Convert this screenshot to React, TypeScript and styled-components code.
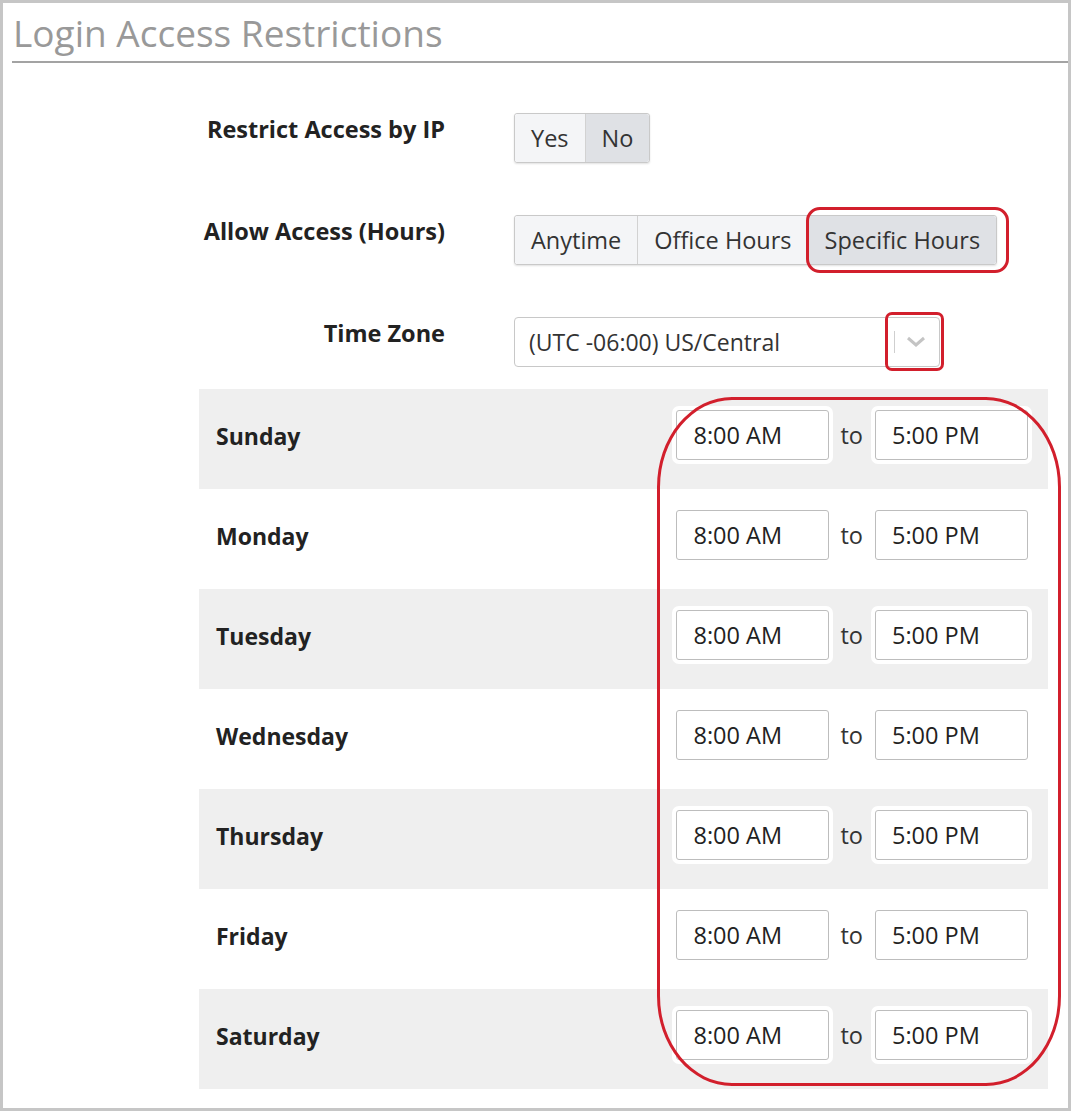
import React from 'react';
import styled, { createGlobalStyle } from 'styled-components';

const GlobalStyle = createGlobalStyle`
  html, body {
    margin: 0;
    padding: 0;
    background: #fff;
  }
  body {
    font-family: 'Open Sans', 'Liberation Sans', sans-serif;
    color: #222;
  }
`;

const ANNOTATION = '#d21f2c';

const Panel = styled.div`
  width: 1071px;
  height: 1111px;
  box-sizing: border-box;
  border: 3px solid #c6c6c6;
  background: #fff;
  overflow: hidden;
`;

const Header = styled.h1`
  margin: 0 0 0 9px;
  padding: 8px 0 6px 1px;
  font-size: 37px;
  font-weight: 400;
  line-height: 44px;
  color: #999;
  border-bottom: 2px solid #a3a3a3;
`;

const Form = styled.div`
  padding: 50px 20px 0 196px;
`;

const Fields = styled.div`
  display: flex;
  flex-direction: column;
  gap: 52px;
  margin-bottom: 22px;
`;

const FieldRow = styled.div`
  display: grid;
  grid-template-columns: 246px 1fr;
  column-gap: 69px;
  align-items: start;
`;

const FieldLabel = styled.div`
  text-align: right;
  font-size: 23.5px;
  font-weight: 700;
  line-height: 30px;
  padding-top: 1px;
  color: #222;
`;

const ButtonGroup = styled.div`
  display: inline-flex;
  border: 1px solid #c9c9c9;
  border-radius: 3px;
  box-shadow: 0 1px 2px rgba(0, 0, 0, 0.12);
  height: 50px;
  box-sizing: border-box;
`;

const GroupButton = styled.button<{ $active?: boolean }>`
  position: relative;
  font-family: inherit;
  font-size: 23.5px;
  color: #333;
  padding: 0 16px;
  border: none;
  border-left: 1px solid #d2d2d2;
  background: ${(p) => (p.$active ? '#dfe1e5' : '#f4f5f7')};
  cursor: pointer;

  &:first-child {
    border-left: none;
    border-radius: 3px 0 0 3px;
  }
  &:last-child {
    border-radius: 0 3px 3px 0;
  }
`;

const Annotation = styled.span<{ $radius: string; $inset: string }>`
  position: absolute;
  inset: ${(p) => p.$inset};
  border: 3px solid ${ANNOTATION};
  border-radius: ${(p) => p.$radius};
  pointer-events: none;
`;

const Select = styled.div`
  position: relative;
  width: 426px;
  height: 50px;
  box-sizing: border-box;
  border: 1px solid #c8c8c8;
  border-radius: 4px;
  display: flex;
  align-items: center;
  padding-left: 14px;
  font-size: 23px;
  color: #333;
  background: #fff;
`;

const SelectText = styled.span`
  flex: 1;
`;

const SelectToggle = styled.span`
  position: relative;
  display: flex;
  align-items: center;
  width: 45px;
  height: 100%;
`;

const Separator = styled.span`
  width: 1px;
  height: 22px;
  background: #cfcfcf;
`;

const Chevron = styled.svg`
  margin-left: 11px;
`;

const DaysList = styled.div`
  position: relative;
`;

const DayRow = styled.div<{ $shaded: boolean }>`
  display: flex;
  align-items: center;
  height: 100px;
  box-sizing: border-box;
  padding: 21px 20px 29px 17px;
  background: ${(p) => (p.$shaded ? '#efefef' : '#fff')};
`;

const DayName = styled.div`
  flex: 1;
  font-size: 23px;
  font-weight: 700;
  color: #222;
  padding-top: 2px;
`;

const TimeInput = styled.input`
  width: 153px;
  height: 50px;
  box-sizing: border-box;
  border: 1px solid #bdbdbd;
  border-radius: 3px;
  padding: 0 0 0 16px;
  font-family: inherit;
  font-size: 23.5px;
  color: #222;
  background: #fff;
  box-shadow: 0 0 0 4px #fff;
  outline: none;
`;

const To = styled.span`
  font-size: 23.5px;
  color: #333;
  margin: 0 12px 0 11px;
`;

const days = ['Sunday', 'Monday', 'Tuesday', 'Wednesday', 'Thursday', 'Friday', 'Saturday'];

const App = () => {
  return (
    <>
      <GlobalStyle />
      <Panel>
        <Header>Login Access Restrictions</Header>
        <Form>
          <Fields>
            <FieldRow>
              <FieldLabel>Restrict Access by IP</FieldLabel>
              <div>
                <ButtonGroup>
                  <GroupButton>Yes</GroupButton>
                  <GroupButton $active>No</GroupButton>
                </ButtonGroup>
              </div>
            </FieldRow>
            <FieldRow>
              <FieldLabel>Allow Access (Hours)</FieldLabel>
              <div>
                <ButtonGroup>
                  <GroupButton>Anytime</GroupButton>
                  <GroupButton>Office Hours</GroupButton>
                  <GroupButton $active>
                    Specific Hours
                    <Annotation $inset="-9px -13px -9px -3px" $radius="14px" />
                  </GroupButton>
                </ButtonGroup>
              </div>
            </FieldRow>
            <FieldRow>
              <FieldLabel>Time Zone</FieldLabel>
              <div>
                <Select>
                  <SelectText>(UTC -06:00) US/Central</SelectText>
                  <SelectToggle>
                    <Separator />
                    <Chevron width="20" height="12" viewBox="0 0 20 12">
                      <polyline points="2,2 10,9 18,2" fill="none" stroke="#c4c4c4" strokeWidth="3" />
                    </Chevron>
                    <Annotation $inset="-6px -5px -5px -9px" $radius="7px" />
                  </SelectToggle>
                </Select>
              </div>
            </FieldRow>
          </Fields>
          <DaysList>
            {days.map((d, i) => (
              <DayRow key={d} $shaded={i % 2 === 0}>
                <DayName>{d}</DayName>
                <TimeInput defaultValue="8:00 AM" />
                <To>to</To>
                <TimeInput defaultValue="5:00 PM" />
              </DayRow>
            ))}
            <Annotation $inset="8px -13px 3px 458px" $radius="75px / 90px" />
          </DaysList>
        </Form>
      </Panel>
    </>
  );
};

export default App;
